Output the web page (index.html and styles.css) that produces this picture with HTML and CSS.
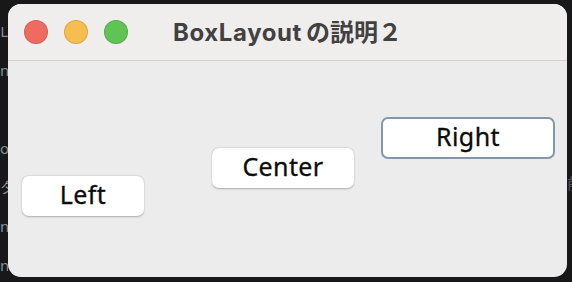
FILE: index.html
```html
<!DOCTYPE html>
<html lang="ja">

<head>
	<meta charset="UTF-8">
	<meta name="viewport" content="width=device-width, initial-scale=1.0">
	<title>BoxLayoutの説明２</title>
	<link rel="stylesheet" href="styles.css">
</head>

<body>
	<div class="desk-edge desk-left">
		<div>L</div>
		<div>n</div>
		<div></div>
		<div>o</div>
		<div>タ</div>
		<div>n</div>
		<div>nl</div>
	</div>

	<main class="window">
		<header class="titlebar">
			<div class="lights">
				<span class="light close"></span>
				<span class="light minimize"></span>
				<span class="light zoom"></span>
			</div>
			<h1 class="title">BoxLayout<span class="title-ja">の説明２</span></h1>
			<div></div>
		</header>

		<section class="panel">
			<button class="btn btn-left">Left</button>
			<button class="btn btn-center">Center</button>
			<button class="btn btn-right is-focused">Right</button>
		</section>
	</main>

	<div class="desk-edge desk-right">
		<div></div>
		<div></div>
		<div></div>
		<div></div>
		<div>前</div>
	</div>
</body>

</html>
```

FILE: styles.css
```css
* {
	margin: 0;
	padding: 0;
	box-sizing: border-box;
}

body {
	display: flex;
	align-items: flex-start;
	height: 100vh;
	overflow: hidden;
	background-color: #18181a;
	font-family: "Noto Sans", "Noto Sans CJK JP", sans-serif;
}

/* bits of the editor behind the window */
.desk-edge {
	display: flex;
	flex-direction: column;
	width: 8px;
	flex-shrink: 0;
	overflow: hidden;
	padding-top: 12px;
	color: #8c8c8e;
	font-size: 15px;
	line-height: 39px;
	text-align: right;
	white-space: nowrap;
}

.desk-right {
	width: 5px;
	padding-top: 8px;
	color: #55575a;
	text-align: left;
}

.desk-edge div {
	height: 39px;
}

.window {
	display: flex;
	flex-direction: column;
	width: 559px;
	height: 273px;
	margin-top: 4px;
	border-radius: 13px;
	overflow: hidden;
	background: #ececec;
}

.titlebar {
	display: grid;
	grid-template-columns: 1fr auto 1fr;
	align-items: center;
	height: 57px;
	padding: 0 16px 1px;
	background: #f0eded;
	border-bottom: 1px solid #d3d1d1;
}

.lights {
	display: flex;
	gap: 16px;
}

.light {
	width: 24px;
	height: 24px;
	border-radius: 50%;
	border: 1px solid rgba(0, 0, 0, 0.12);
}

.close {
	background: #ef6b5f;
}

.minimize {
	background: #f6be4f;
}

.zoom {
	background: #5fc453;
}

.title {
	font-family: "Inter", "Noto Sans CJK JP", sans-serif;
	font-size: 24px;
	font-weight: 700;
	color: #414141;
	letter-spacing: 0.6px;
	white-space: nowrap;
	padding-bottom: 2px;
}

.title-ja {
	margin-left: 4px;
	letter-spacing: 0;
}

.panel {
	display: flex;
	align-items: flex-start;
	flex: 1;
}

.btn {
	display: flex;
	justify-content: center;
	align-items: center;
	height: 40px;
	padding-bottom: 4px;
	font-family: "Noto Sans", sans-serif;
	font-size: 25px;
	color: #0c0c0c;
	letter-spacing: 0.4px;
	-webkit-text-stroke: 0.3px #0c0c0c;
	background: #fff;
	border: none;
	border-radius: 7px;
	box-shadow: 0 0.5px 2px rgba(0, 0, 0, 0.28);
}

.btn-left {
	width: 122px;
	margin: 115px 0 0 14px;
}

.btn-center {
	width: 142px;
	margin: 87px 0 0 68px;
}

.btn-right {
	width: 174px;
	margin: 56px 0 0 27px;
}

.is-focused {
	height: 42px;
	border: 2px solid #8596ab;
	box-shadow: none;
}
```
